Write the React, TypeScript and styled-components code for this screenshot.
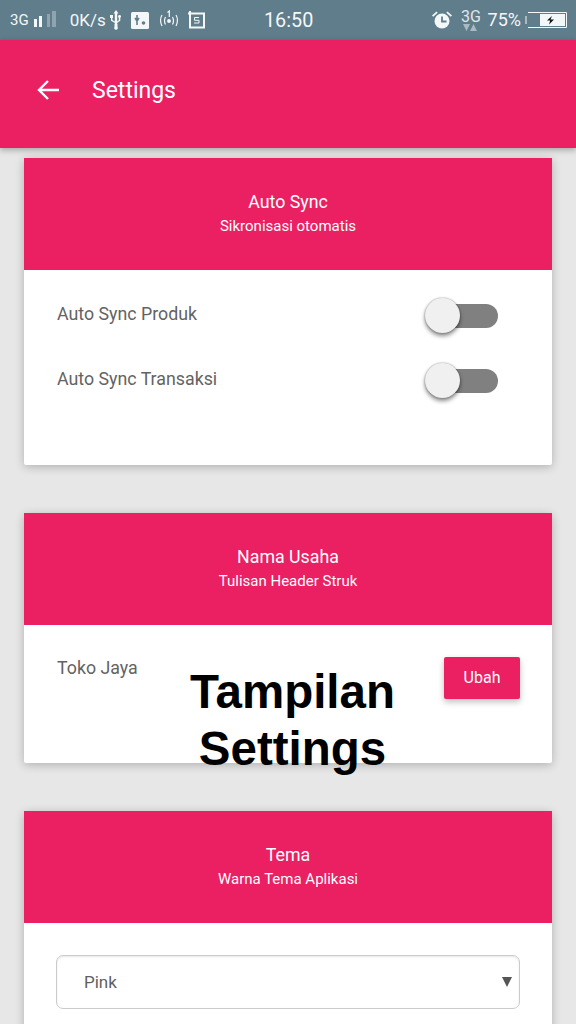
import styled, { createGlobalStyle } from "styled-components";

const GlobalStyle = createGlobalStyle`
  html, body {
    margin: 0;
    padding: 0;
    background: #e7e7e7;
    font-family: Roboto, "Liberation Sans", sans-serif;
  }
`;

const Screen = styled.div`
  position: relative;
  width: 576px;
  height: 1024px;
  overflow: hidden;
  background: #e7e7e7;
`;

const StatusBar = styled.div`
  height: 40px;
  background: #607d8b;
  color: #f4f7f8;
  display: flex;
  align-items: center;
  justify-content: space-between;
  padding: 0 9px 0 10px;
  box-sizing: border-box;
  position: relative;
`;

const StatusGroup = styled.div`
  display: flex;
  align-items: center;
`;

const StatusText = styled.span<{ $left?: number; $size?: number }>`
  margin-left: ${(p) => p.$left ?? 0}px;
  font-size: ${(p) => p.$size ?? 16}px;
  line-height: 20px;
`;

const Clock = styled.span`
  position: absolute;
  left: 264px;
  top: 10px;
  font-size: 19.800px;
  line-height: 22px;
`;

const Icon = styled.svg<{ $left?: number }>`
  display: block;
  flex-shrink: 0;
  margin-left: ${(p) => p.$left ?? 0}px;
`;

const AppBar = styled.header`
  height: 108px;
  background: #ea2063;
  display: flex;
  align-items: center;
  padding: 0 0 8px 36px;
  box-sizing: border-box;
  box-shadow: 0 2px 6px rgba(0, 0, 0, 0.3);
  position: relative;
  z-index: 1;
  color: #fff;
`;

const AppTitle = styled.h1`
  margin: 0 0 0 32px;
  font-size: 23px;
  font-weight: 400;
`;

const Content = styled.main`
  display: flex;
  flex-direction: column;
  gap: 48px;
  padding: 10px 24px 0;
`;

const Card = styled.section<{ $height?: number }>`
  background: #fff;
  border-radius: 2px;
  box-shadow: 0 2px 10px rgba(0, 0, 0, 0.24);
  height: ${(p) => (p.$height ? `${p.$height}px` : "auto")};
  flex-shrink: 0;
  display: flex;
  flex-direction: column;
`;

const CardHeader = styled.div`
  height: 112px;
  flex-shrink: 0;
  background: #ea2063;
  color: #fff;
  display: flex;
  flex-direction: column;
  align-items: center;
  justify-content: center;
  padding-bottom: 2px;
  box-sizing: border-box;
`;

const CardTitle = styled.div`
  font-size: 17.800px;
  line-height: 24px;
`;

const CardSubtitle = styled.div`
  font-size: 15px;
  font-weight: 400;
  line-height: 20px;
  margin-top: 2px;
`;

const SyncBody = styled.div`
  display: flex;
  flex-direction: column;
  gap: 29px;
  padding: 26px 32px 0;
`;

const Row = styled.div`
  display: flex;
  align-items: center;
  justify-content: space-between;
  height: 36px;
`;

const Label = styled.span`
  font-size: 17.800px;
  color: #636363;
  position: relative;
  top: -1px;
  left: 1px;
`;

const Switch = styled.div`
  position: relative;
  width: 58px;
  height: 24px;
  margin: 4px 22px 0 0;
  border-radius: 0 12px 12px 0;
  background: #808080;
`;

const SwitchKnob = styled.div`
  position: absolute;
  left: -15px;
  top: -6px;
  width: 35px;
  height: 35px;
  border-radius: 50%;
  background: #f0f0f0;
  box-shadow: 0 3px 4px rgba(0, 0, 0, 0.45), 0 0 2px rgba(0, 0, 0, 0.4);
`;

const NameBody = styled.div`
  display: flex;
  align-items: flex-start;
  justify-content: space-between;
  padding: 32px 32px 0;
`;

const NameLabel = styled(Label)`
  line-height: 24px;
`;

const Button = styled.button`
  width: 76px;
  height: 42px;
  border: 0;
  border-radius: 2px;
  padding: 0 0 2px;
  background: #ea2063;
  color: #fff;
  font-family: inherit;
  font-size: 16px;
  box-shadow: 0 3px 6px rgba(0, 0, 0, 0.25);
`;

const ThemeBody = styled.div`
  padding: 32px 32px 40px;
`;

const SelectBox = styled.div`
  height: 54px;
  box-sizing: border-box;
  border: 1px solid #cbcbcb;
  border-radius: 7px;
  box-shadow: inset 0 1px 2px rgba(0, 0, 0, 0.1);
  display: flex;
  align-items: center;
  justify-content: space-between;
  padding: 0 7px 0 27px;
  color: #5f5f5f;
  font-size: 17px;
`;

const Caption = styled.div`
  position: absolute;
  left: 0;
  top: 663px;
  width: 585px;
  text-align: center;
  color: #000;
  font-family: "Liberation Sans", Arial, sans-serif;
  font-size: 47.500px;
  font-weight: 700;
  line-height: 57px;
  z-index: 2;
`;

export default function App() {
  return (
    <Screen>
      <GlobalStyle />
      <StatusBar>
        <StatusGroup>
          <StatusText $size={15}>3G</StatusText>
          <Icon $left={4} width="23" height="20" viewBox="0 0 23 20">
            <rect x="1" y="9" width="3" height="8" fill="#f4f7f8" />
            <rect x="6" y="6" width="3" height="11" fill="#f4f7f8" />
            <rect x="14" y="4" width="3" height="13" fill="#8fa4ae" />
            <rect x="19" y="1" width="4" height="16" fill="#8fa4ae" />
          </Icon>
          <StatusText $left={14} $size={17}>0K/s</StatusText>
          <Icon $left={4} width="12" height="20" viewBox="0 0 12 20" fill="#f4f7f8">
            <path d="M6 0l2.500 3.500H7.200V14H4.800V3.500H3.500z" />
            <path d="M4.500 14h3v3a1.800 1.800 0 1 1-3 0z" />
            <path d="M0 5h3v3H2.400v2L5 11.500V13L1 10.800V8H0zM9.500 5a1.500 1.500 0 0 1 .8 2.800v3L7 13v-1.500l1.800-1.200V7.800A1.500 1.500 0 0 1 9.500 5z" />
          </Icon>
          <Icon $left={9} width="18" height="17" viewBox="0 0 18 17">
            <rect width="18" height="17" rx="1.500" fill="#f4f7f8" />
            <path d="M6 3v10M4 6l2 3 2-3" stroke="#607d8b" strokeWidth="1.600" fill="none" />
            <circle cx="12.500" cy="11" r="1.800" fill="#607d8b" />
          </Icon>
          <Icon $left={8} width="24" height="22" viewBox="0 0 24 22" fill="none" stroke="#f4f7f8" strokeWidth="1.200">
            <path d="M5 6q-3 5 0 11M8.500 8q-2 4 0 7.500M19 6q3 5 0 11M15.500 8q2 4 0 7.500" />
            <circle cx="12" cy="12" r="1.300" fill="#f4f7f8" />
            <path d="M10.500 3.500l1.800-1.500V8" />
          </Icon>
          <Icon $left={7} width="17" height="18" viewBox="0 0 17 18" fill="none" stroke="#f4f7f8">
            <path d="M2 0v16.500h14V2.500H0" strokeWidth="2" />
            <path d="M11 6.500H6.500v2.800h4.500v2.700H6" strokeWidth="1" />
          </Icon>
        </StatusGroup>
        <Clock>16:50</Clock>
        <StatusGroup>
          <Icon width="20" height="20" viewBox="0 0 20 20" fill="#f4f7f8">
            <path d="M0 5.500L4.500 1.500l1.200 1.300-4.500 4zM20 5.500L15.500 1.500l-1.200 1.300 4.500 4z" />
            <circle cx="10" cy="11" r="7.500" />
            <path d="M10 6.500V11.500H14.500" stroke="#607d8b" strokeWidth="1.800" fill="none" />
          </Icon>
          <Icon $left={9} width="20" height="24" viewBox="0 0 20 24">
            <text x="0" y="14" fontSize="16" fill="#dfe6e9" fontFamily="Roboto, sans-serif">3G</text>
            <path d="M2 16h7l-3.500 7zM9 23h7l-3.500-7z" fill="#a9bac2" />
          </Icon>
          <StatusText $left={7} $size={18}>75%</StatusText>
          <Icon $left={4} width="42" height="16" viewBox="0 0 42 16">
            <path d="M1 4v8" stroke="#f4f7f8" strokeWidth="1" />
            <path d="M3 15.500H41.500V.5H3" fill="none" stroke="#f4f7f8" strokeWidth="1" />
            <rect x="15" y="2" width="25" height="12" fill="#f4f7f8" />
            <path d="M22 8.500l5-4.500-1.500 3.500H29l-5 5 1.200-4z" fill="#111" />
          </Icon>
        </StatusGroup>
      </StatusBar>

      <AppBar>
        <Icon width="24" height="24" viewBox="0 0 24 24" fill="none" stroke="#fff" strokeWidth="2.400">
          <path d="M23 12H3M12 3l-9 9 9 9" />
        </Icon>
        <AppTitle>Settings</AppTitle>
      </AppBar>

      <Content>
        <Card $height={307}>
          <CardHeader>
            <CardTitle>Auto Sync</CardTitle>
            <CardSubtitle>Sikronisasi otomatis</CardSubtitle>
          </CardHeader>
          <SyncBody>
            <Row>
              <Label>Auto Sync Produk</Label>
              <Switch>
                <SwitchKnob />
              </Switch>
            </Row>
            <Row>
              <Label>Auto Sync Transaksi</Label>
              <Switch>
                <SwitchKnob />
              </Switch>
            </Row>
          </SyncBody>
        </Card>

        <Card $height={250}>
          <CardHeader>
            <CardTitle>Nama Usaha</CardTitle>
            <CardSubtitle>Tulisan Header Struk</CardSubtitle>
          </CardHeader>
          <NameBody>
            <NameLabel>Toko Jaya</NameLabel>
            <Button>Ubah</Button>
          </NameBody>
        </Card>

        <Card>
          <CardHeader>
            <CardTitle>Tema</CardTitle>
            <CardSubtitle>Warna Tema Aplikasi</CardSubtitle>
          </CardHeader>
          <ThemeBody>
            <SelectBox>
              Pink
              <Icon width="10" height="12" viewBox="0 0 10 12" fill="#555">
                <path d="M0 1h10L5 11z" />
              </Icon>
            </SelectBox>
          </ThemeBody>
        </Card>
      </Content>

      <Caption>
        Tampilan
        <br />
        Settings
      </Caption>
    </Screen>
  );
}
